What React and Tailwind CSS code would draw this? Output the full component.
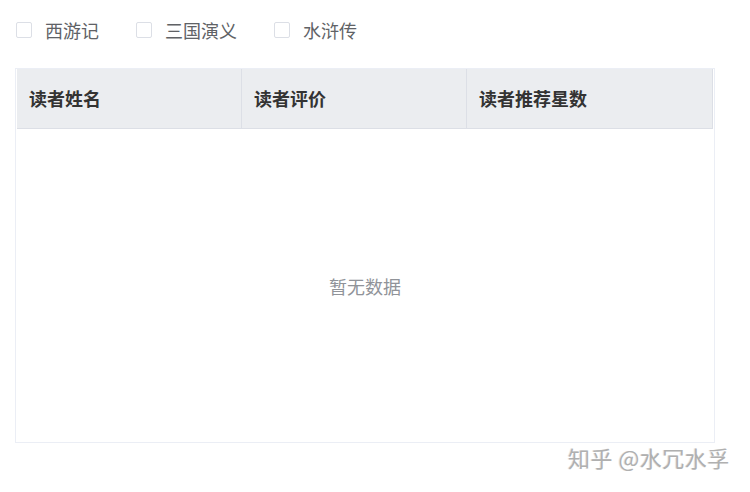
export default function App() {
  const font = { fontFamily: '"Noto Sans CJK SC", "Noto Sans", sans-serif' };
  const books = ["西游记", "三国演义", "水浒传"];
  return (
    <div className="relative w-[750px] h-[492px] bg-white" style={font}>
      <div className="flex items-center pl-[16px] pt-[20px] h-[40px] gap-[37px]">
        {books.map((b) => (
          <label key={b} className="flex items-center gap-[13px] text-[18px] leading-none text-[#606266]">
            <span className="w-[16px] h-[16px] border border-[#dcdfe6] rounded-[2px] bg-white" />
            <span>{b}</span>
          </label>
        ))}
      </div>
      <div className="ml-[15px] mt-[28px] w-[700px] h-[375px] border border-[#ebeef5] flex flex-col">
        <div className="flex h-[60px] bg-[#ebedf0] border-b border-[#dcdfe6] ml-[1px] mr-[1px] border-r border-r-[#dcdfe6]">
          <div className="w-[225px] border-r border-[#dcdfe6] flex items-center pl-[12px] text-[18px] font-bold text-[#333]">读者姓名</div>
          <div className="w-[225px] border-r border-[#dcdfe6] flex items-center pl-[12px] text-[18px] font-bold text-[#333]">读者评价</div>
          <div className="flex-1 flex items-center pl-[12px] text-[18px] font-bold text-[#333]">读者推荐星数</div>
        </div>
        <div className="flex-1 flex items-center justify-center text-[18px] text-[#909399] pt-[2px]">暂无数据</div>
      </div>
      <div
        className="absolute left-[568px] top-[446px] text-[22px] tracking-[0.5px] text-[#b0b0b0] leading-none"
        style={{ textShadow: "1px 1px 0 #ffffff, -1px 0 0 #e4e4e4" }}
      >
        知乎 @水冗水孚
      </div>
    </div>
  );
}
